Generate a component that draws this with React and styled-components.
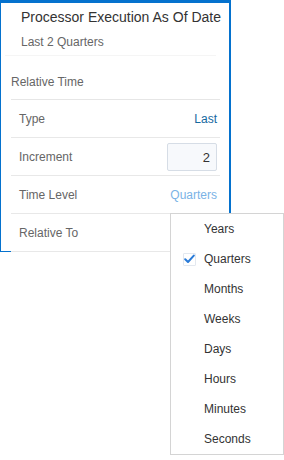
import React from "react";
import styled, { createGlobalStyle } from "styled-components";

const Global = createGlobalStyle`
  html, body { margin: 0; padding: 0; background: #fff; }
  body { font-family: "Liberation Sans", Arial, sans-serif; font-size: 12px; }
  * { box-sizing: border-box; }
`;

const Page = styled.div`
  position: relative;
  width: 284px;
  height: 460px;
`;

const Panel = styled.div`
  width: 231px;
  border-style: solid;
  border-color: #0572ce;
  border-width: 3px 2px 1px 1px;
  background: #fff;
`;

const Header = styled.div`
  margin-left: 4px;
  width: 211px;
  padding: 4px 0 5px 16px;
  border-bottom: 1px solid #f5f5f5;
  display: flex;
  flex-direction: column;
  gap: 7px;
`;

const Title = styled.div`
  font-size: 14px;
  line-height: 20px;
  color: #333;
  white-space: nowrap;
`;

const Subtitle = styled.div`
  font-size: 12px;
  line-height: 16px;
  color: #666;
`;

const Section = styled.div`
  margin: 0 9px -1px 10px;
`;

const SectionTitle = styled.div`
  padding: 18px 0 9px;
  line-height: 16px;
  color: #666;
  border-bottom: 1px solid #e6e6e6;
`;

const Row = styled.div`
  height: 38px;
  display: flex;
  align-items: center;
  justify-content: space-between;
  padding: 1px 3px 0 8px;
  border-bottom: 1px solid #e8e8e8;
`;

const Label = styled.span`
  color: #666;
  line-height: 16px;
`;

const Value = styled.span`
  color: ${(p) => (p.$light ? "#7ab3e6" : "#15699f")};
  line-height: 16px;
`;

const NumberBox = styled.div`
  width: 50px;
  height: 28px;
  border: 1px solid #d6dde6;
  border-radius: 2px;
  background: #f7f9fc;
  color: #333;
  display: flex;
  align-items: center;
  justify-content: flex-end;
  padding-right: 6px;
  font-size: 13px;
`;

const Menu = styled.div`
  position: absolute;
  left: 170px;
  top: 213px;
  width: 114px;
  border: 1px solid #d4d4d4;
  background: #fff;
  display: flex;
  flex-direction: column;
`;

const Item = styled.div`
  height: 30px;
  display: flex;
  align-items: center;
  padding-left: 12px;
  color: #333;
  gap: 8px;
`;

const CheckSlot = styled.span`
  width: 13px;
  height: 13px;
  display: flex;
  align-items: center;
  justify-content: center;
  border: 1px solid ${(p) => (p.$on ? "#e3e8ef" : "transparent")};
  border-radius: 1px;
`;

const Check = () => (
  <svg width="11" height="10" viewBox="0 0 11 10">
    <polyline
      points="1.2,5.2 4,8 9.8,1.6"
      fill="none"
      stroke="#2a7bd8"
      strokeWidth="2"
      strokeLinecap="round"
      strokeLinejoin="round"
    />
  </svg>
);

const items = ["Years", "Quarters", "Months", "Weeks", "Days", "Hours", "Minutes", "Seconds"];

export default function App() {
  return (
    <Page>
      <Global />
      <Panel>
        <Header>
          <Title>Processor Execution As Of Date</Title>
          <Subtitle>Last 2 Quarters</Subtitle>
        </Header>
        <Section>
          <SectionTitle>Relative Time</SectionTitle>
          <Row>
            <Label>Type</Label>
            <Value>Last</Value>
          </Row>
          <Row>
            <Label>Increment</Label>
            <NumberBox>2</NumberBox>
          </Row>
          <Row>
            <Label>Time Level</Label>
            <Value $light>Quarters</Value>
          </Row>
          <Row>
            <Label>Relative To</Label>
          </Row>
        </Section>
      </Panel>
      <Menu>
        {items.map((it) => (
          <Item key={it}>
            <CheckSlot $on={it === "Quarters"}>{it === "Quarters" && <Check />}</CheckSlot>
            <span>{it}</span>
          </Item>
        ))}
      </Menu>
    </Page>
  );
}
